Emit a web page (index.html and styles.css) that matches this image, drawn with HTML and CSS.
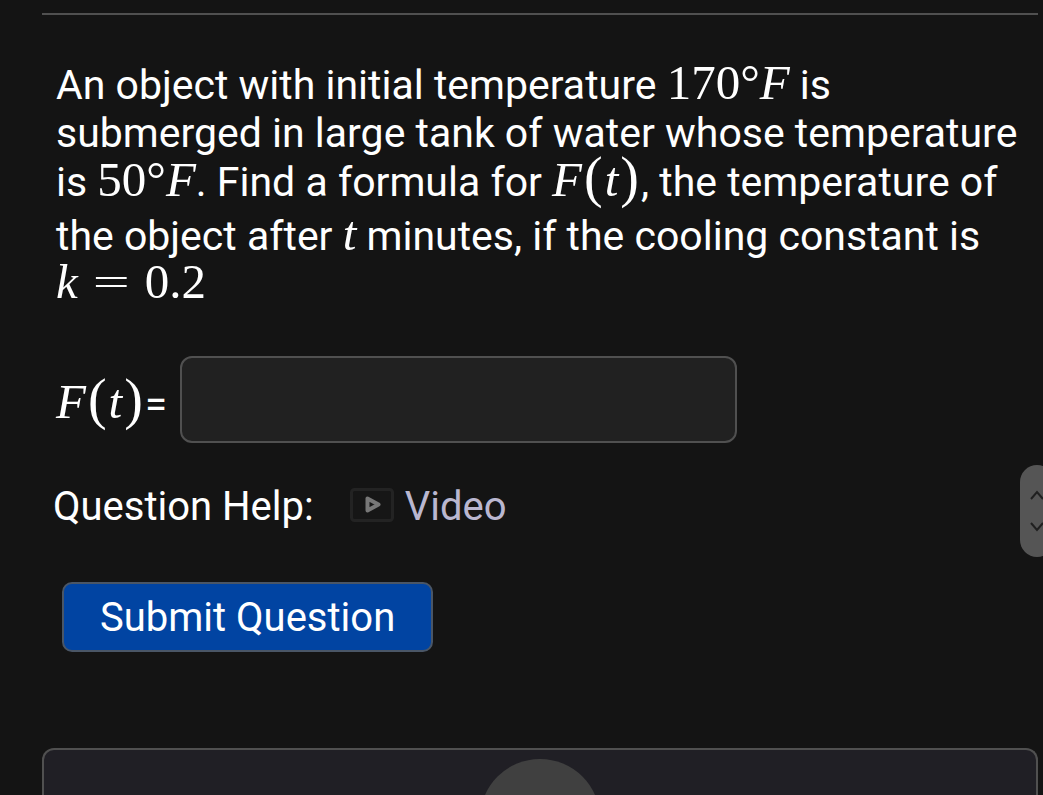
FILE: index.html
```html
<!DOCTYPE html>
<html lang="en">
<head>
<meta charset="utf-8">
<meta name="viewport" content="width=device-width, initial-scale=1">
<title>Question</title>
<link rel="stylesheet" href="styles.css">
</head>
<body>
<main class="page">
  <form class="question">
    <p class="prompt">An object with initial temperature <span class="math">170°<i>F</i></span> is submerged in large tank of water whose temperature is <span class="math">50°<i>F</i></span>. Find a formula for <span class="math func"><i>F</i><span class="paren">(</span><i>t</i><span class="paren">)</span></span>, the temperature of the object after <span class="math"><i>t</i></span> minutes, if the cooling constant is <span class="math"><i>k</i><span class="equals">=</span>0.2</span></p>
    <div class="answer">
      <label class="answer-label" for="answer"><span class="math"><i>F</i><span class="paren">(</span><i>t</i><span class="paren">)</span></span><span class="sign">=</span></label>
      <input class="answer-box" id="answer" type="text" autocomplete="off">
    </div>
    <div class="help">
      <span>Question Help:</span>
      <a class="video" href="#video">
        <svg class="video-icon" viewBox="0 0 44 34" aria-hidden="true">
          <rect x="1.500" y="1.500" width="41" height="31" rx="3" fill="#161616" stroke="#232323" stroke-width="3"/>
          <path d="M17.500 10.500v12l11-6z" fill="none" stroke="#777" stroke-width="4" stroke-linejoin="round"/>
        </svg>
        <span>Video</span>
      </a>
    </div>
    <button class="submit" type="button">Submit Question</button>
  </form>
  <section class="panel"><div class="disc"></div></section>
</main>
<button class="scroller" type="button" aria-label="Scroll">
  <svg class="scroller-icon" viewBox="0 0 34 92" fill="none" stroke="#202020" stroke-width="2" aria-hidden="true">
    <path d="M11 34l6-7 6 7M11 58l6 7 6-7"/>
  </svg>
</button>
</body>
</html>
```
FILE: styles.css
```css
* {
  box-sizing: border-box;
}

body {
  margin: 0;
  min-height: 100vh;
  overflow: hidden;
  background: #141414;
  color: #fff;
  font: 40px/48px Roboto, "Liberation Sans", sans-serif;
}

.page {
  display: flex;
  flex-direction: column;
  height: 100vh;
  padding: 13px 5px 0 42px;
}

.question {
  flex: none;
  display: flex;
  flex-direction: column;
  align-items: flex-start;
  padding: 46px 16px 0 14px;
  border-top: 2px solid #505050;
}

.prompt {
  margin: 0;
  font-size: 41px;
}

.math {
  font-family: "Liberation Serif", serif;
  font-size: 49px;
  line-height: 40px;
  white-space: nowrap;
}

.func {
  display: inline-block;
  padding-bottom: 12px;
}

.paren {
  margin: 0 2px;
  font-size: 56px;
  line-height: 40px;
}

.equals {
  margin: 0 13px;
  font-family: "DejaVu Sans", sans-serif;
  font-weight: 200;
  line-height: 40px;
}

.answer {
  display: flex;
  align-items: center;
  gap: 13px;
  width: 100%;
  margin-top: 48px;
}

.answer-label {
  padding-top: 8px;
}

.answer-box {
  flex: 0 1 557px;
  min-width: 0;
  height: 87px;
  padding: 0 20px;
  border: 2px solid #505050;
  border-radius: 12px;
  background: #212121;
  color: inherit;
  font: inherit;
}

.help {
  display: flex;
  align-items: center;
  gap: 36px;
  margin: 40px 0 0 -3px;
}

.video {
  display: flex;
  align-items: center;
  gap: 11px;
  color: #bab7d0;
  text-decoration: none;
}

.video-icon {
  width: 44px;
  height: 34px;
  margin-bottom: 5px;
}

.submit {
  margin: 51px 0 0 6px;
  padding: 10px 36px 8px;
  border: 2px solid #4a5666;
  border-radius: 10px;
  background: #0144a2;
  color: #fff;
  font: inherit;
}

.panel {
  flex: 1;
  display: flex;
  justify-content: center;
  margin-top: 96px;
  padding-top: 9px;
  overflow: hidden;
  border: 2px solid #505050;
  border-bottom: 0;
  border-radius: 12px 12px 0 0;
  background: #201f25;
}

.disc {
  flex: none;
  width: 120px;
  height: 120px;
  border-radius: 50%;
  background: #404040;
}

.scroller {
  position: absolute;
  top: 465px;
  right: -11px;
  width: 34px;
  height: 92px;
  padding: 0;
  border: 0;
  border-radius: 17px;
  background: #555;
}

.scroller-icon {
  display: block;
  width: 34px;
  height: 92px;
}
```
